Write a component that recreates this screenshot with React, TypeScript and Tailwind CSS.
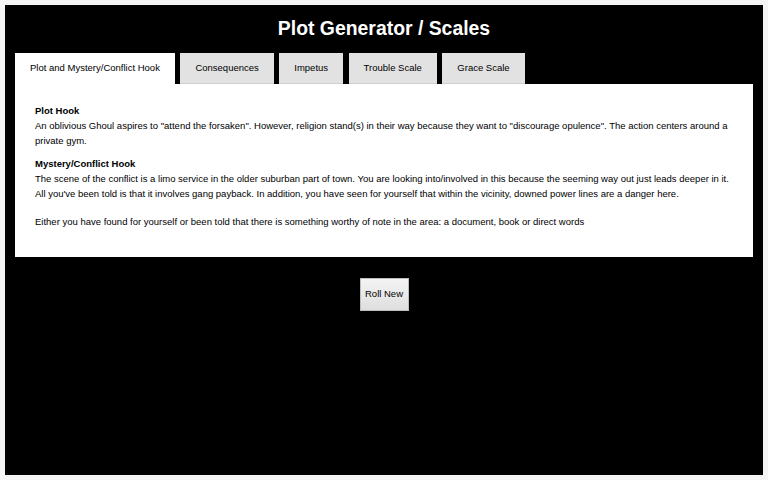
import React, { useState } from 'react';

const TABS = ['Plot and Mystery/Conflict Hook', 'Consequences', 'Impetus', 'Trouble Scale', 'Grace Scale'];

export default function App() {
  const [active, setActive] = useState(0);

  return (
    <div className="h-[480px] w-[768px] bg-[#f5f5f5] p-[5px] font-['Liberation_Sans',Arial,sans-serif]">
      <div className="flex h-[470px] w-[758px] flex-col bg-black px-[10px]">
        <h1 className="pt-[12px] pb-[14px] text-center text-[19.4px] font-bold leading-[22px] text-white">
          Plot Generator / Scales
        </h1>
        <div className="flex gap-[5.5px]">
          {TABS.map((t, i) => (
            <button
              key={t}
              onClick={() => setActive(i)}
              className={
                i === active
                  ? 'h-[31px] bg-white px-[15px] text-[9.5px] text-black'
                  : 'h-[31px] border-b border-[#cfcfcf] bg-[#e2e2e2] px-[15px] text-[9.5px] text-black'
              }
            >
              {t}
            </button>
          ))}
        </div>
        <div className="h-[173px] bg-white px-[20px] pt-[19px] text-[9.5px] leading-[15px] text-black">
          <p className="font-bold">Plot Hook</p>
          <p>
            An oblivious Ghoul aspires to "attend the forsaken". However, religion stand(s) in their way because they want to
            "discourage opulence". The action centers around a private gym.
          </p>
          <p className="mt-[8px] font-bold">Mystery/Conflict Hook</p>
          <p>
            The scene of the conflict is a limo service in the older suburban part of town. You are looking into/involved in this
            because the seeming way out just leads deeper in it. All you've been told is that it involves gang payback. In
            addition, you have seen for yourself that within the vicinity, downed power lines are a danger here.
          </p>
          <p className="mt-[13px]">
            Either you have found for yourself or been told that there is something worthy of note in the area: a document, book
            or direct words
          </p>
        </div>
        <div className="flex justify-center pt-[21px]">
          <button className="h-[33px] w-[49px] border border-[#bdbdbd] bg-gradient-to-b from-[#f4f4f4] to-[#dedede] text-[9.5px] text-black">
            Roll New
          </button>
        </div>
      </div>
    </div>
  );
}
